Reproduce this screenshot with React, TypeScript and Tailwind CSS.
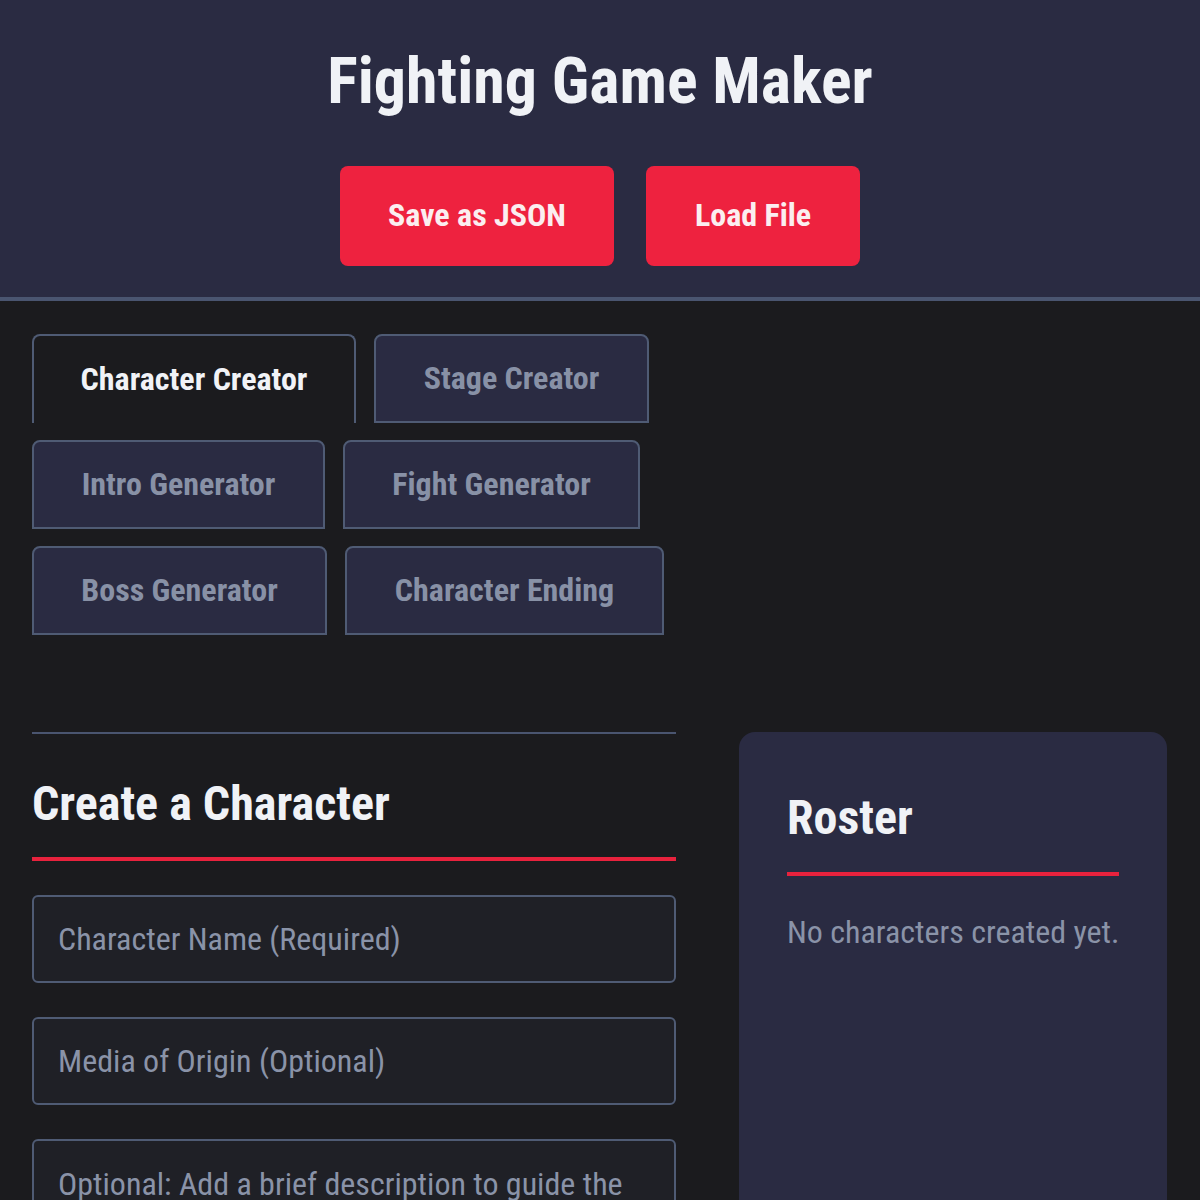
import React from "react";

const font = { fontFamily: '"Roboto Condensed", Roboto, "Liberation Sans", sans-serif' };

function Tab({ label, active, className = "" }: { label: string; active?: boolean; className?: string }) {
  return (
    <button
      className={
        "h-[89px] rounded-t-lg border-2 border-[#4f5b74] pb-[2px] text-[32px] font-bold leading-none " +
        (active
          ? "border-b-0 bg-[#1b1b1e] text-[#f1f3f7]"
          : "bg-[#2a2b42] text-[#8891a6]") +
        " " +
        className
      }
    >
      {label}
    </button>
  );
}

export default function App() {
  return (
    <div className="min-h-[1200px] bg-[#1b1b1e]" style={font}>
      <header className="flex h-[301px] flex-col items-center border-b-[4px] border-[#4a5570] bg-[#2a2b42]">
        <h1 className="mt-[46px] text-[64px] font-bold leading-[72px] text-[#f0f2f6]">Fighting Game Maker</h1>
        <div className="mt-[48px] flex gap-[32px]">
          <button className="h-[100px] w-[274px] rounded-lg bg-[#ee223f] pb-[2px] text-[32px] font-bold text-[#fbeef0]">Save as JSON</button>
          <button className="h-[100px] w-[214px] rounded-lg bg-[#ee223f] pb-[2px] text-[32px] font-bold text-[#fbeef0]">Load File</button>
        </div>
      </header>

      <main className="px-[32px] pt-[33px]">
        <div className="flex w-[643px] flex-col gap-[17px]">
          <div className="flex gap-[18px]">
            <Tab label="Character Creator" active className="w-[324px]" />
            <Tab label="Stage Creator" className="w-[275px]" />
          </div>
          <div className="flex gap-[18px]">
            <Tab label="Intro Generator" className="w-[293px]" />
            <Tab label="Fight Generator" className="w-[297px]" />
          </div>
          <div className="flex gap-[18px]">
            <Tab label="Boss Generator" className="w-[295px]" />
            <Tab label="Character Ending" className="w-[319px]" />
          </div>
        </div>

        <div className="mt-[97px] grid grid-cols-[644px_428px] gap-[63px]">
          <section className="border-t-2 border-[#4a5570]">
            <h2 className="mt-[42px] text-[48px] font-bold leading-[56px] text-[#f0f2f6]">Create a Character</h2>
            <div className="mt-[25px] h-[4px] bg-[#e8223d]" />
            <div className="mt-[34px] flex flex-col gap-[34px]">
              <div className="flex h-[88px] items-center rounded-md border-2 border-[#4f5b74] bg-[#1f2026] px-[24px] text-[32px] text-[#8a93a8]">
                Character Name (Required)
              </div>
              <div className="flex h-[88px] items-center rounded-md border-2 border-[#4f5b74] bg-[#1f2026] px-[24px] text-[32px] text-[#8a93a8]">
                Media of Origin (Optional)
              </div>
              <div className="h-[160px] rounded-md border-2 border-[#4f5b74] bg-[#1f2026] px-[24px] pt-[22px] text-[32px] leading-[42px] text-[#8a93a8]">
                Optional: Add a brief description to guide the AI's generation of this character's personality and moveset.
              </div>
            </div>
          </section>
          <aside className="h-[600px] rounded-2xl bg-[#2a2b42] px-[48px] pt-[58px]">
            <h2 className="text-[48px] font-bold leading-[56px] text-[#f0f2f6]">Roster</h2>
            <div className="mt-[26px] h-[4px] bg-[#e8223d]" />
            <p className="mt-[34px] whitespace-nowrap text-[32px] leading-[44px] text-[#8a93a8]">No characters created yet.</p>
          </aside>
        </div>
      </main>
    </div>
  );
}
